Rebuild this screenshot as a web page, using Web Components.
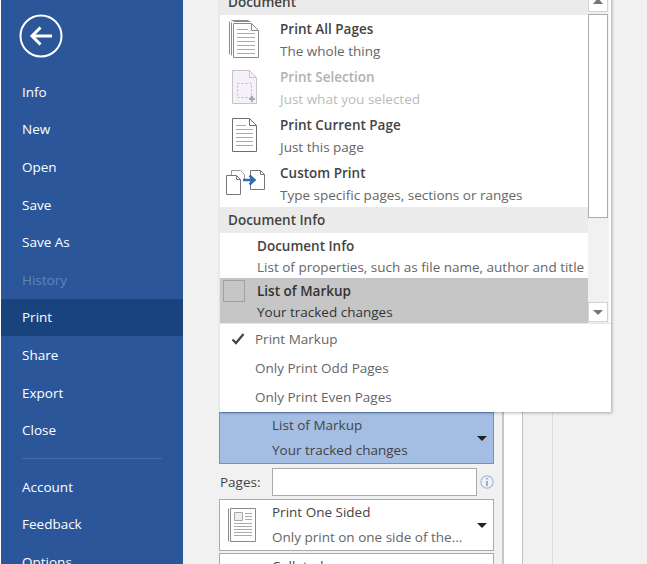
<!DOCTYPE html>
<html>
<head>
<meta charset="utf-8">
<title>Print</title>
<style>
html, body { margin: 0; height: 564px; overflow: hidden; background: #f1f1f1; }
body { display: flex; font-family: "Open Sans", "Liberation Sans", sans-serif; font-size: 13.5px; color: #444; }
</style>
</head>
<body>
<back-nav>
    <nav-item>Info</nav-item>
    <nav-item>New</nav-item>
    <nav-item>Open</nav-item>
    <nav-item>Save</nav-item>
    <nav-item>Save As</nav-item>
    <nav-item disabled>History</nav-item>
    <nav-item active>Print</nav-item>
    <nav-item>Share</nav-item>
    <nav-item>Export</nav-item>
    <nav-item>Close</nav-item>
    <nav-item slot="bottom">Account</nav-item>
    <nav-item slot="bottom">Feedback</nav-item>
    <nav-item slot="bottom">Options</nav-item>
</back-nav>

<print-panel>
    <drop-box selected title-text="List of Markup" sub-text="Your tracked changes"></drop-box>
    <pages-field></pages-field>
    <drop-box title-text="Print One Sided" sub-text="Only print on one side of the...">
        <svg width="30" height="36" viewBox="0 0 30 36" fill="none" stroke="#8a8a8a">
            <path d="M1.500 1.500v33M3.500 1.500h25v33h-25z" fill="#fff"/>
            <path d="M7.500 5.500h8v8h-8z" stroke="#aaa" fill="#eee"/>
            <path d="M18 6.500h7M18 9.500h7M18 12.500h7M7 16.500h18M7 19.500h18M7 22.500h18M7 25.500h18M7 28.500h18" stroke="#aaa"/>
        </svg>
    </drop-box>
    <drop-box title-text="Collated" sub-text="1,2,3 1,2,3 1,2,3"></drop-box>
</print-panel>
<preview-track></preview-track>

<print-menu>
    <menu-head>Document</menu-head>
    <menu-row title-text="Print All Pages" sub-text="The whole thing">
        <svg width="34" height="40" viewBox="0 0 34 40" fill="none" stroke="#8c8c8c">
            <path d="M1.500 2.500v33M3.500 1.500h17M3.500 3.500v33M5.500 2.500h17" />
            <path d="M5.500 4.500h18l7 7v27h-25z" fill="#fff"/>
            <path d="M23.500 4.500v7h7" />
            <path d="M9 10.500h11M9 14.500h18M9 18.500h18M9 22.500h18M9 26.500h18M9 30.500h18M9 34.500h18" stroke="#aaa"/>
        </svg>
    </menu-row>
    <menu-row disabled title-text="Print Selection" sub-text="Just what you selected">
        <svg width="34" height="40" viewBox="0 0 34 40" fill="none" stroke="#c8c2cc">
            <path d="M4.500 3.500h17l7 7v26h-24z" fill="#f6f1f8"/>
            <path d="M21.500 3.500v7h7" />
            <path d="M9.500 16.500h14v14h-14z" stroke-dasharray="2 2" stroke="#bdb6c2"/>
            <path d="M21 32h6M24 29v6" stroke="#a8a8a8" stroke-width="2"/>
        </svg>
    </menu-row>
    <menu-row title-text="Print Current Page" sub-text="Just this page">
        <svg width="34" height="40" viewBox="0 0 34 40" fill="none" stroke="#6e6e6e">
            <path d="M4.500 3.500h17l7 7v26h-24z" fill="#fff"/>
            <path d="M21.500 3.500v7h7" />
            <path d="M8 10.500h10M8 14.500h17M8 18.500h17M8 22.500h17M8 26.500h17M8 30.500h17" stroke="#aaa"/>
        </svg>
    </menu-row>
    <menu-row title-text="Custom Print" sub-text="Type specific pages, sections or ranges">
        <svg width="44" height="36" viewBox="0 0 44 36" fill="none" stroke="#777">
            <path d="M8.500 10.500v-5h9l4 4v6" stroke="#999"/>
            <path d="M3.500 10.500h10l4 4v15h-14z" fill="#fff"/>
            <path d="M13.500 10.500v4h4" />
            <path d="M27.500 5.500h10l4 4v15h-14z" fill="#fff"/>
            <path d="M37.500 5.500v4h4" />
            <path d="M20 15h10" stroke="#2f6db5" stroke-width="2.500"/>
            <path d="M26.500 10.500L31.500 15l-5 4.500" stroke="#2f6db5" stroke-width="2.500"/>
        </svg>
    </menu-row>
    <menu-head>Document Info</menu-head>
    <menu-row short title-text="Document Info" sub-text="List of properties, such as file name, author and title"></menu-row>
    <menu-row short highlighted title-text="List of Markup" sub-text="Your tracked changes"></menu-row>
    <check-row checked>Print Markup</check-row>
    <check-row>Only Print Odd Pages</check-row>
    <check-row>Only Print Even Pages</check-row>
</print-menu>

<script>
(function() {
    "use strict";

    function shadow(el, html) {
        el.attachShadow({mode: 'open'}).innerHTML = html;
    }

    class BackNav extends HTMLElement {
        constructor() {
            super();
            shadow(this, `
                <style>
                    :host { display: block; box-sizing: border-box; flex: none; width: 183px; height: 600px;
                            margin-right: 36px; border-left: 1px solid #fff; background: #2b579a; color: #fff; }
                    .back { display: block; margin: 14px 0 0 18px; }
                    .top { margin-top: 15px; }
                    hr { height: 1px; border: 0; margin: 9px 21px 9px 21px; background: #426cae; }
                </style>
                <svg class="back" width="44" height="44" viewBox="0 0 44 44" fill="none" stroke="#fff">
                    <circle cx="22" cy="22" r="20.500" stroke-width="2"/>
                    <path d="M33 22H13" stroke-width="3"/>
                    <path d="M21.500 13.500L13 22l8.500 8.500" stroke-width="3"/>
                </svg>
                <div class="top"><slot></slot></div>
                <hr>
                <slot name="bottom"></slot>
            `);
        }
    }

    class NavItem extends HTMLElement {
        constructor() {
            super();
            shadow(this, `
                <style>
                    :host { display: flex; align-items: center; box-sizing: border-box; height: 37.600px;
                            padding-left: 21px; }
                    :host([active]) { background: #19437c; }
                    :host([disabled]) { color: #6083b8; }
                </style>
                <slot></slot>
            `);
        }
    }

    class PrintPanel extends HTMLElement {
        constructor() {
            super();
            shadow(this, `
                <style>
                    :host { display: flex; flex-direction: column; flex: none; box-sizing: border-box;
                            width: 275px; padding-top: 412px; }
                </style>
                <slot></slot>
            `);
        }
    }

    class DropBox extends HTMLElement {
        constructor() {
            super();
            shadow(this, `
                <style>
                    :host { display: grid; grid-template-columns: 44px 1fr 24px; box-sizing: border-box; flex: none;
                            height: 52px; margin-bottom: 2px; border: 1px solid #ababab; background: #fff; color: #444; }
                    :host([selected]) { background: #a3bde3; border-color: #6d93cc; margin-bottom: 4px; }
                    .icon { display: flex; justify-content: center; align-items: center; }
                    .text { display: flex; flex-direction: column; justify-content: center; gap: 6px; line-height: 19px;
                            margin-left: 8px; white-space: nowrap; }
                    .sub { color: #666; }
                    :host([selected]) .sub { color: #444; }
                    .arrow { align-self: center; width: 0; height: 0; margin-left: 8px;
                             border: 5px solid transparent; border-top: 5px solid #222; border-bottom: 0; }
                </style>
                <div class="icon"><slot></slot></div>
                <div class="text">
                    <div>${this.getAttribute('title-text')}</div>
                    <div class="sub">${this.getAttribute('sub-text')}</div>
                </div>
                <div class="arrow"></div>
            `);
        }
    }

    class PagesField extends HTMLElement {
        constructor() {
            super();
            shadow(this, `
                <style>
                    :host { display: flex; align-items: center; flex: none; height: 28px; margin-bottom: 3px; color: #444; }
                    label { width: 53px; padding-left: 1px; box-sizing: border-box; }
                    input { box-sizing: border-box; width: 205px; height: 28px; margin: 0; border: 1px solid #ababab; background: #fff; }
                    svg { margin-left: 3px; }
                </style>
                <label>Pages:</label>
                <input type="text">
                <svg width="14" height="14" viewBox="0 0 14 14" fill="none" stroke="#a3bde3">
                    <circle cx="7" cy="7" r="6.200" stroke-width="1.200"/>
                    <path d="M7 6v5" stroke="#7f9fcf" stroke-width="1.600"/>
                    <path d="M7 3v1.500" stroke="#7f9fcf" stroke-width="1.600"/>
                </svg>
            `);
        }
    }

    class PreviewTrack extends HTMLElement {
        constructor() {
            super();
            shadow(this, `
                <style>
                    :host { display: flex; flex: none; height: 564px; margin-left: 8px; }
                    .track { width: 18px; background: #fff; border-left: 2px solid #c6c6c6; border-right: 1px solid #c0c0c0; }
                    .gap { width: 29px; border-right: 1px solid #dcdcdc; }
                </style>
                <div class="track"></div>
                <div class="gap"></div>
            `);
        }
    }

    class PrintMenu extends HTMLElement {
        constructor() {
            super();
            shadow(this, `
                <style>
                    :host { position: absolute; left: 220px; top: -11px; box-sizing: border-box; width: 391px; height: 423px;
                            background: #fff; box-shadow: 1px 1px 3px rgba(0,0,0,.3); }
                    .list { position: relative; display: block; }
                    .bar { position: absolute; left: 368px; top: 0; width: 21px; height: 334px; background: #f1f1f1; }
                    .btn { position: absolute; left: 0; width: 20px; height: 20px; box-sizing: border-box;
                           background: #fff; border: 1px solid #d2d2d2; }
                    .btn::after { content: ""; position: absolute; left: 4px; width: 0; height: 0; border: 5px solid transparent; }
                    .up { top: 3px; }
                    .up::after { top: 5px; border-bottom: 6px solid #777; border-top: 0; }
                    .down { top: 313px; }
                    .down::after { top: 7px; border-top: 5px solid #777; border-bottom: 0; }
                    .thumb { position: absolute; left: 0; top: 25px; width: 20px; height: 204px; box-sizing: border-box;
                             background: #fff; border: 1px solid #ababab; }
                    .rule { position: absolute; left: 0; top: 334px; width: 391px; height: 1px; background: #e4e4e4; }
                </style>
                <div class="list"><slot></slot></div>
                <div class="bar">
                    <div class="btn up"></div>
                    <div class="thumb"></div>
                    <div class="btn down"></div>
                </div>
                <div class="rule"></div>
            `);
        }
    }

    class MenuHead extends HTMLElement {
        constructor() {
            super();
            shadow(this, `
                <style>
                    :host { display: flex; align-items: center; box-sizing: border-box; width: 368px; height: 26px;
                            padding-left: 8px; background: #ebebeb; color: #444; font-weight: 600; }
                </style>
                <slot></slot>
            `);
        }
    }

    class MenuRow extends HTMLElement {
        constructor() {
            super();
            shadow(this, `
                <style>
                    :host { display: flex; box-sizing: border-box; width: 368px; height: 48px; color: #444; }
                    :host([short]) { height: 45px; }
                    :host([highlighted]) { background: #c6c6c6; color: #333; }
                    :host([disabled]) { color: #b1b1b1; }
                    .icon { flex: none; width: 50px; margin-right: 10px; display: flex; justify-content: center; align-items: center; }
                    :host([short]) .icon { width: 37px; margin-right: 0; }
                    .text { line-height: 22px; padding-top: 3px; white-space: nowrap; }
                    :host([short]) .text { padding-top: 2px; }
                    b { display: block; font-weight: 600; }
                    .sub { color: #666; }
                    :host([short]) .sub { margin-top: -1px; }
                    :host([disabled]) .sub { color: #bbb; }
                    :host([highlighted]) .sub { color: #333; }
                    .box { display: none; box-sizing: border-box; width: 22px; height: 22px; border: 1px solid #a0a0a0; margin: -19px 0 0 -9px; }
                    :host([highlighted]) .box { display: block; }
                </style>
                <div class="icon"><slot></slot><div class="box"></div></div>
                <div class="text">
                    <b>${this.getAttribute('title-text')}</b>
                    <div class="sub">${this.getAttribute('sub-text')}</div>
                </div>
            `);
        }
    }

    class CheckRow extends HTMLElement {
        constructor() {
            super();
            shadow(this, `
                <style>
                    :host { display: flex; align-items: center; box-sizing: border-box; height: 29px; padding-top: 2px; color: #666; }
                    .tick { flex: none; width: 35px; display: flex; justify-content: center; }
                    svg { visibility: hidden; }
                    :host([checked]) svg { visibility: visible; }
                </style>
                <div class="tick">
                    <svg width="14" height="12" viewBox="0 0 14 12" fill="none" stroke="#444" stroke-width="2.200">
                        <path d="M1.500 6.500L5 10l7.500-9"/>
                    </svg>
                </div>
                <slot></slot>
            `);
        }
    }

    window.customElements.define('back-nav', BackNav);
    window.customElements.define('nav-item', NavItem);
    window.customElements.define('print-panel', PrintPanel);
    window.customElements.define('drop-box', DropBox);
    window.customElements.define('pages-field', PagesField);
    window.customElements.define('preview-track', PreviewTrack);
    window.customElements.define('print-menu', PrintMenu);
    window.customElements.define('menu-head', MenuHead);
    window.customElements.define('menu-row', MenuRow);
    window.customElements.define('check-row', CheckRow);
})();
</script>
</body>
</html>
